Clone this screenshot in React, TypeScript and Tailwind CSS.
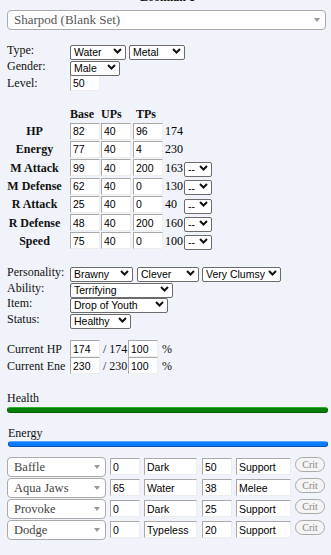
import React from "react";

function Chevron() {
  return (
    <svg
      width="9"
      height="6"
      viewBox="0 0 9 6"
      className="pointer-events-none absolute right-[4px] top-1/2 -translate-y-1/2"
    >
      <path d="M1 1l3.5 3.5L8 1" fill="none" stroke="#111" strokeWidth="2" />
    </svg>
  );
}

function Sel({ value, className }: { value: string; className: string }) {
  return (
    <div className={`relative ${className}`}>
      <select
        defaultValue={value}
        className="h-full w-full appearance-none rounded-[2px] border border-[#6b6b6b] bg-white pl-[3px] pr-[14px] font-['Liberation_Sans',sans-serif] text-[10.5px] leading-none text-black outline-none"
      >
        <option>{value}</option>
      </select>
      <Chevron />
    </div>
  );
}

function Field({ value, className }: { value: string; className: string }) {
  return (
    <input
      readOnly
      value={value}
      className={`h-[17px] border border-[#ededed] border-l-[#a9a9a9] border-t-[#a9a9a9] bg-white px-[2px] font-['Liberation_Sans',sans-serif] text-[10.5px] text-black outline-none ${className}`}
    />
  );
}

const stats = [
  { name: "HP", base: "82", ups: "40", tps: "96", total: "174", nature: false },
  { name: "Energy", base: "77", ups: "40", tps: "4", total: "230", nature: false },
  { name: "M Attack", base: "99", ups: "40", tps: "200", total: "163", nature: true },
  { name: "M Defense", base: "62", ups: "40", tps: "0", total: "130", nature: true },
  { name: "R Attack", base: "25", ups: "40", tps: "0", total: "40", nature: true },
  { name: "R Defense", base: "48", ups: "40", tps: "200", total: "160", nature: true },
  { name: "Speed", base: "75", ups: "40", tps: "0", total: "100", nature: true },
];

const moves = [
  { name: "Baffle", power: "0", type: "Dark", acc: "50", cat: "Support" },
  { name: "Aqua Jaws", power: "65", type: "Water", acc: "38", cat: "Melee" },
  { name: "Provoke", power: "0", type: "Dark", acc: "25", cat: "Support" },
  { name: "Dodge", power: "0", type: "Typeless", acc: "20", cat: "Support" },
];

function Arrow() {
  return (
    <svg
      width="6"
      height="4"
      viewBox="0 0 6 4"
      className="pointer-events-none absolute right-[6px] top-1/2 -translate-y-1/2"
    >
      <path d="M0 0h6L3 4z" fill="#999" />
    </svg>
  );
}

export default function App() {
  return (
    <div className="flex min-h-screen flex-col bg-[#f0f3f9] font-['Liberation_Serif',serif] text-[12px] text-[#111]">
      <div className="pl-[7px] pr-[3px]">
        <div className="h-[4px] overflow-hidden">
          <div className="-mt-[10px] h-[14px] text-center text-[12px] font-bold leading-[14px]">
            Loomian 1
          </div>
        </div>

        <div className="relative mt-[6px] h-[20px] w-[319px]">
          <div className="h-full rounded-[4px] border border-[#aaa] bg-white pl-[6px] text-[13px] leading-[18px] text-[#555]">
            Sharpod (Blank Set)
          </div>
          <Arrow />
        </div>

        <div className="mt-[13px] flex flex-col">
          <div className="flex h-[16px] items-start">
            <span className="w-[63px] leading-[15px]">Type:</span>
            <Sel value="Water" className="h-[15px] w-[56px]" />
            <Sel value="Metal" className="ml-[3px] h-[15px] w-[56px]" />
          </div>
          <div className="flex h-[15px] items-start">
            <span className="w-[63px] leading-[15px]">Gender:</span>
            <Sel value="Male" className="h-[15px] w-[50px]" />
          </div>
          <div className="flex h-[17px] items-center">
            <span className="w-[63px]">Level:</span>
            <Field value="50" className="w-[30px]" />
          </div>
        </div>

        <div className="mt-[14px] flex h-[17px] items-center font-bold">
          <span className="w-[63px]" />
          <span className="w-[31px]">Base</span>
          <span className="w-[32px]">UPs</span>
          <span className="w-[30px] pl-[3px]">TPs</span>
        </div>

        <div className="flex flex-col">
          {stats.map((s) => (
            <div key={s.name} className="flex h-[18.3px] items-center">
              <span className="w-[55px] text-center font-bold">{s.name}</span>
              <Field value={s.base} className="ml-[8px] w-[30px]" />
              <Field value={s.ups} className="ml-[1px] w-[30px]" />
              <Field value={s.tps} className="ml-[2px] w-[30px]" />
              <span className="ml-[2px] w-[19px] text-black">{s.total}</span>
              {s.nature && <Sel value="--" className="h-[15px] w-[28px]" />}
            </div>
          ))}
        </div>

        <div className="mt-[15px] flex flex-col">
          <div className="flex h-[16px] items-start">
            <span className="w-[63px] leading-[15px]">Personality:</span>
            <Sel value="Brawny" className="h-[15px] w-[63px]" />
            <Sel value="Clever" className="ml-[4px] h-[15px] w-[62px]" />
            <Sel value="Very Clumsy" className="ml-[3px] h-[15px] w-[79px]" />
          </div>
          <div className="flex h-[15px] items-start">
            <span className="w-[63px] leading-[15px]">Ability:</span>
            <Sel value="Terrifying" className="h-[15px] w-[103px]" />
          </div>
          <div className="flex h-[16px] items-start">
            <span className="w-[63px] leading-[15px]">Item:</span>
            <Sel value="Drop of Youth" className="h-[15px] w-[98px]" />
          </div>
          <div className="flex h-[15px] items-start">
            <span className="w-[63px] leading-[15px]">Status:</span>
            <Sel value="Healthy" className="h-[15px] w-[61px]" />
          </div>
        </div>

        <div className="mt-[13px] flex flex-col">
          <div className="flex h-[17px] items-center">
            <span className="w-[63px]">Current HP</span>
            <Field value="174" className="w-[30px]" />
            <span className="ml-[3px] w-[25px] whitespace-nowrap">/ 174</span>
            <Field value="100" className="w-[30px]" />
            <span className="ml-[4px]">%</span>
          </div>
          <div className="flex h-[17px] items-center">
            <span className="w-[63px]">Current Ene</span>
            <Field value="230" className="w-[30px]" />
            <span className="ml-[3px] w-[25px] whitespace-nowrap">/ 230</span>
            <Field value="100" className="w-[30px]" />
            <span className="ml-[4px]">%</span>
          </div>
        </div>

        <div className="mt-[17px] h-[14px] leading-[14px]">Health</div>
        <div className="mt-[2px] h-[6px] w-[321px] rounded-[3px] border border-[#0a5c0a] border-t-[#2cb12e] bg-[#038003]" />

        <div className="ml-[1px] mt-[13px] h-[14px] leading-[14px]">Energy</div>
        <div className="ml-[1px] mt-[1px] h-[6px] w-[320px] rounded-[3px] border border-[#0a4fb5] border-t-[#59a5ff] bg-[#0d7dff]" />

        <div className="mt-[10px] flex flex-col">
          {moves.map((m) => (
            <div key={m.name} className="flex h-[21px] items-start">
              <div className="relative h-[20px] w-[99px]">
                <div className="h-full rounded-[4px] border border-[#aaa] bg-white pl-[6px] text-[12.5px] leading-[19px] text-[#444]">
                  {m.name}
                </div>
                <Arrow />
              </div>
              <Field value={m.power} className="ml-[4px] mt-[1px] w-[30px]" />
              <Field value={m.type} className="ml-[4px] mt-[1px] w-[53px]" />
              <Field value={m.acc} className="ml-[5px] mt-[1px] w-[30px]" />
              <Field value={m.cat} className="ml-[4px] mt-[1px] w-[55px]" />
              <button className="ml-[4px] h-[15px] w-[30px] rounded-full border border-[#aaa] bg-[#f4f4f4] text-[10px] leading-[13px] text-[#888]">
                Crit
              </button>
            </div>
          ))}
        </div>
      </div>
    </div>
  );
}
